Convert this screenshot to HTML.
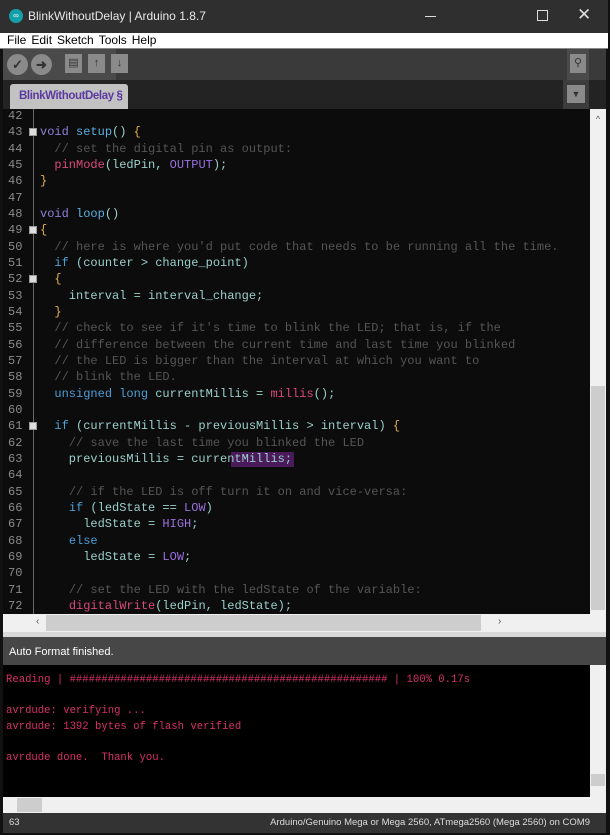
<!DOCTYPE html>
<html><head><meta charset="utf-8"><style>
*{margin:0;padding:0;box-sizing:border-box}
body{width:610px;height:835px;background:#111;position:relative;overflow:hidden;font-family:"Liberation Sans",sans-serif}
.abs{position:absolute}
#title{left:0;top:0;width:608px;height:33px;background:#2f2f2f;color:#e8e8e8;font-size:12px}
#menu{left:0;top:33px;width:608px;height:16px;background:#fff;font-size:12px;color:#000;border-bottom:1px solid #888}
#menu span{margin-right:5px}
#tool{left:3px;top:49px;width:603px;height:31px;background:#3a3a3a}
.grp{position:absolute;top:0;height:31px;background:#4a4a4a}
.circ{position:absolute;top:5px;width:21px;height:21px;border-radius:50%;background:#8a8a8a;color:#333;font-size:13px;text-align:center;line-height:21px;font-weight:bold}
.sq{position:absolute;top:5px;width:17px;height:19px;background:#8a8a8a;color:#333;font-size:11px;text-align:center;line-height:18px}
#tabs{left:3px;top:80px;width:603px;height:29px;background:#232323}
#tab{left:10px;top:84px;width:118px;height:25px;background:#c2c2c2;border-radius:3px 3px 0 0;color:#5a3aa0;font-size:11.5px;font-weight:bold;line-height:25px;padding-left:9px;letter-spacing:-0.4px}
#editor{left:3px;top:109px;width:587px;height:505px;background:#0c0c0c}
#gutter{left:3px;top:109px;width:31px;height:505px;border-right:1px solid #666;background:#0c0c0c}
pre{font-family:"Liberation Mono",monospace;font-size:12px;line-height:16.33px;white-space:pre}
#nums{left:8px;top:108px;color:#8a8a8a}
#code{left:40px;top:108px;color:#9bd0cc}
.fold{position:absolute;left:29px;width:8px;height:8px;background:#ddd;border:1px solid #999}
.c{color:#555}.k{color:#8d80d8}.f{color:#5ab0e0}.r{color:#d8487a}.p{color:#9a70e0}.b{color:#e0b050}.i{color:#4d9ed8}
#vs{left:590px;top:109px;width:16px;height:505px;background:#f0f0f0}
#hs{left:3px;top:614px;width:603px;height:18px;background:#f0f0f0}
#status{left:3px;top:637px;width:603px;height:28px;background:#474747;color:#fff;font-size:11px;line-height:30px;padding-left:6px}
#console{left:3px;top:665px;width:603px;height:132px;background:#000}
#con{left:6px;top:673px;color:#d83068;font-size:10.6px;line-height:15.5px}
#hs2{left:3px;top:797px;width:603px;height:16px;background:#f0f0f0}
#bot{left:3px;top:813px;width:603px;height:20px;background:#333;color:#ddd;font-size:9.5px;line-height:20px}
</style></head><body>
<div id="title" class="abs">
 <div class="abs" style="left:9px;top:9px;width:14px;height:14px;border-radius:50%;background:#14a0a8;color:#fff;font-size:8px;line-height:14px;text-align:center">∞</div>
 <div class="abs" style="left:28px;top:9px">BlinkWithoutDelay | Arduino 1.8.7</div>
 <div class="abs" style="left:425px;top:16px;width:11px;height:1px;background:#ddd"></div>
 <div class="abs" style="left:537px;top:10px;width:11px;height:11px;border:1px solid #ddd"></div>
 <div class="abs" style="left:577px;top:5px;font-size:17px;color:#ddd">✕</div>
</div>
<div id="menu" class="abs"><div style="padding-left:7px;line-height:14px"><span>File</span><span>Edit</span><span>Sketch</span><span>Tools</span><span>Help</span></div></div>
<div id="tool" class="abs">
 <div class="grp" style="left:0;width:52px"><div class="circ" style="left:4px">✓</div><div class="circ" style="left:28px">➜</div></div>
 <div class="grp" style="left:52px;width:61px"><div class="sq" style="left:10px">▤</div><div class="sq" style="left:33px">↑</div><div class="sq" style="left:56px">↓</div></div>
 <div class="grp" style="left:564px;width:22px"><div class="sq" style="left:3px;width:16px">⚲</div></div>
</div>
<div id="tabs" class="abs"><div class="abs" style="left:560px;top:0;width:26px;height:29px;background:#3c3c3c"></div><div class="abs" style="left:564px;top:5px;width:18px;height:18px;background:#8a8a8a;color:#333;font-size:9px;text-align:center;line-height:18px">▼</div></div>
<div id="tab" class="abs">BlinkWithoutDelay §</div>
<div id="editor" class="abs"></div>
<div id="gutter" class="abs"></div>
<div class="fold" style="top:128px"></div><div class="fold" style="top:226px"></div><div class="fold" style="top:275px"></div><div class="fold" style="top:422px"></div>
<pre id="nums" class="abs">42
43
44
45
46
47
48
49
50
51
52
53
54
55
56
57
58
59
60
61
62
63
64
65
66
67
68
69
70
71
72</pre>
<div class="abs" style="left:231px;top:452px;width:63px;height:15px;background:#4a1a5a"></div>
<pre id="code" class="abs">&#8203;
<span class="k">void</span> <span class="f">setup</span>() <span class="b">{</span>
  <span class="c">// set the digital pin as output:</span>
  <span class="r">pinMode</span>(ledPin, <span class="p">OUTPUT</span>);
<span class="b">}</span>

<span class="k">void</span> <span class="f">loop</span>()
<span class="b">{</span>
  <span class="c">// here is where you'd put code that needs to be running all the time.</span>
  <span class="i">if</span> (counter &gt; change_point)
  <span class="b">{</span>
    interval = interval_change;
  <span class="b">}</span>
  <span class="c">// check to see if it's time to blink the LED; that is, if the</span>
  <span class="c">// difference between the current time and last time you blinked</span>
  <span class="c">// the LED is bigger than the interval at which you want to</span>
  <span class="c">// blink the LED.</span>
  <span class="i">unsigned</span> <span class="i">long</span> currentMillis = <span class="r">millis</span>();

  <span class="i">if</span> (currentMillis - previousMillis &gt; interval) <span class="b">{</span>
    <span class="c">// save the last time you blinked the LED</span>
    previousMillis = currentMillis;

    <span class="c">// if the LED is off turn it on and vice-versa:</span>
    <span class="i">if</span> (ledState == <span class="p">LOW</span>)
      ledState = <span class="p">HIGH</span>;
    <span class="i">else</span>
      ledState = <span class="p">LOW</span>;

    <span class="c">// set the LED with the ledState of the variable:</span>
    <span class="r">digitalWrite</span>(ledPin, ledState);</pre>
<div id="vs" class="abs"><div class="abs" style="left:0;top:5px;width:16px;font-size:9px;color:#555;text-align:center">^</div><div class="abs" style="left:1px;top:277px;width:14px;height:224px;background:#cdcdcd"></div></div>
<div id="hs" class="abs"><div class="abs" style="left:33px;top:2px;font-size:10px;color:#555">‹</div><div class="abs" style="left:43px;top:1px;width:435px;height:16px;background:#cdcdcd"></div><div class="abs" style="left:495px;top:2px;font-size:10px;color:#555">›</div></div>
<div class="abs" style="left:3px;top:632px;width:603px;height:5px;background:#d8d8d8"></div>
<div id="status" class="abs">Auto Format finished.</div>
<div id="console" class="abs"><div class="abs" style="left:587px;top:0;width:16px;height:132px;background:#f0f0f0"><div class="abs" style="left:1px;top:109px;width:14px;height:12px;background:#cdcdcd"></div></div></div>
<pre id="con" class="abs">Reading | ################################################## | 100% 0.17s

avrdude: verifying ...
avrdude: 1392 bytes of flash verified

avrdude done.  Thank you.</pre>
<div id="hs2" class="abs"><div class="abs" style="left:14px;top:1px;width:25px;height:14px;background:#cdcdcd"></div></div>
<div id="bot" class="abs"><span style="padding-left:6px">63</span><span class="abs" style="right:16px">Arduino/Genuino Mega or Mega 2560, ATmega2560 (Mega 2560) on COM9</span></div>
</body></html>
